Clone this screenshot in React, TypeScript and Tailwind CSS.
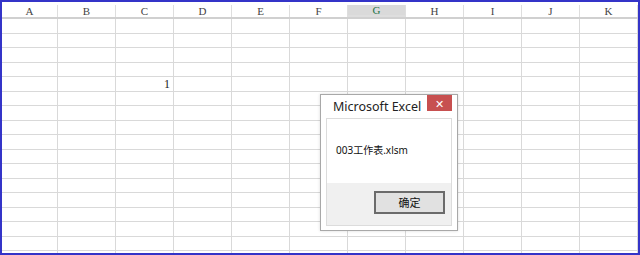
import React from "react";

const cols = ["A", "B", "C", "D", "E", "F", "G", "H", "I", "J", "K"];
const rows = Array.from({ length: 17 }, (_, i) => i);

const App = () => {
  return (
    <div className="relative w-[640px] h-[255px] overflow-hidden bg-white border-2 border-[#3434c8]">
      {/* column headers */}
      <div className="flex h-[17px] pt-[3px] border-b-2 border-[#d0d0d0] bg-white">
        {cols.map((c, i) => (
          <div
            key={c}
            className={
              (i === 0 ? "w-[56px] " : "w-[58px] ") +
              (c === "G"
                ? "bg-[#dadada] text-[#217346] border-b-2 border-[#217346] "
                : "text-[#444444] ") +
              "h-full flex items-center justify-center border-r border-[#dedede] text-[11px] leading-none"
            }
            style={{ fontFamily: '"Liberation Serif", "DejaVu Serif", serif' }}
          >
            {c}
          </div>
        ))}
      </div>

      {/* grid */}
      <div className="flex flex-col">
        {rows.map((r) => (
          <div key={r} className="flex h-[14.5px] border-b border-[#d9d9d9]">
            {cols.map((c, i) => (
              <div
                key={c}
                className={
                  (i === 0 ? "w-[56px] " : "w-[58px] ") +
                  "h-full border-r border-[#d9d9d9] flex items-center justify-end pr-[3px] text-[12px] leading-none text-[#222]"
                }
                style={{ fontFamily: '"Liberation Serif", "DejaVu Serif", serif' }}
              >
                {r === 4 && c === "C" ? "1" : ""}
              </div>
            ))}
          </div>
        ))}
      </div>

      {/* message box */}
      <div className="absolute left-[318px] top-[92px] w-[138px] h-[137px] bg-white border border-[#a8a8a8] shadow-[0_0_3px_rgba(0,0,0,0.15)] flex flex-col px-[5px] pb-[4px]">
        <div className="h-[23px] flex items-start justify-between">
          <div
            className="pt-[4px] pl-[7px] text-[12.5px] leading-[16px] text-[#222] whitespace-nowrap"
            style={{ fontFamily: '"Noto Sans", "Open Sans", sans-serif' }}
          >
            Microsoft Excel
          </div>
          <div className="w-[25px] h-[16px] bg-[#c75050] flex items-center justify-center text-white text-[11px] leading-none">
            ✕
          </div>
        </div>
        <div className="flex-1 flex flex-col border border-[#dcdcdc]">
          <div
            className="h-[64px] bg-white pl-[9px] pt-[25px] text-[10px] leading-[13px] text-[#111] whitespace-nowrap"
            style={{ fontFamily: '"Noto Sans", "Noto Sans CJK SC", sans-serif' }}
          >
            003工作表.xlsm
          </div>
          <div className="flex-1 bg-[#f0f0f0] flex justify-end items-start pt-[8px] pr-[6px]">
            <div
              className="w-[71px] h-[23px] bg-[#e1e1e1] border-2 border-[#6b6b6b] flex items-center justify-center text-[11px] leading-none text-[#111]"
              style={{ fontFamily: '"Noto Sans CJK SC", sans-serif' }}
            >
              确定
            </div>
          </div>
        </div>
      </div>
    </div>
  );
};

export default App;
